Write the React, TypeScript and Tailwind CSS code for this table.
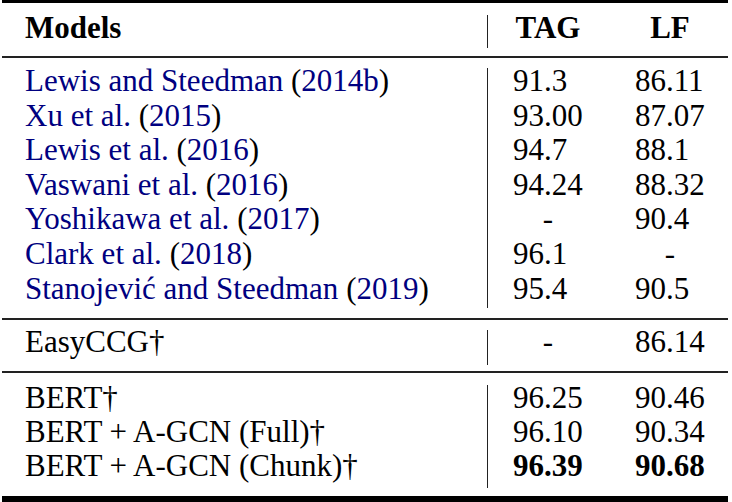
import React from "react";

type Cite = { name: string; year: string; tag: string; lf: string };

const cited: Cite[] = [
  { name: "Lewis and Steedman", year: "2014b", tag: "91.3", lf: "86.11" },
  { name: "Xu et al.", year: "2015", tag: "93.00", lf: "87.07" },
  { name: "Lewis et al.", year: "2016", tag: "94.7", lf: "88.1" },
  { name: "Vaswani et al.", year: "2016", tag: "94.24", lf: "88.32" },
  { name: "Yoshikawa et al.", year: "2017", tag: "-", lf: "90.4" },
  { name: "Clark et al.", year: "2018", tag: "96.1", lf: "-" },
  { name: "Stanojević and Steedman", year: "2019", tag: "95.4", lf: "90.5" },
];

const ours = [
  { model: "BERT†", tag: "96.25", lf: "90.46", bold: false },
  { model: "BERT + A-GCN (Full)†", tag: "96.10", lf: "90.34", bold: false },
  { model: "BERT + A-GCN (Chunk)†", tag: "96.39", lf: "90.68", bold: true },
];

const Num = ({ v, bold }: { v: string; bold?: boolean }) => (
  <div
    className={`w-[70px] h-[34.5px] whitespace-nowrap ${
      v === "-" ? "text-center" : "text-left"
    } ${bold ? "font-bold" : ""}`}
  >
    {v}
  </div>
);

const App = () => {
  return (
    <div className="w-[732px] h-[502px] bg-white pl-[2px] text-black font-[family-name:'Liberation_Serif',serif] text-[31px] leading-[34.5px]">
      <div className="w-[726px] flex flex-col">
        <div className="h-[3px] bg-black" />

        {/* header */}
        <div className="flex h-[53px]">
          <div className="w-[485px] pl-[23px] pt-[7.5px] font-bold">Models</div>
          <div className="w-px bg-[#222] mt-[12px] mb-[8px]" />
          <div className="w-[122px] pl-[25px] pt-[7.5px] font-bold">
            <div className="w-[70px] text-center">TAG</div>
          </div>
          <div className="flex-1 pl-[25px] pt-[7.5px] font-bold">
            <div className="w-[70px] text-center">LF</div>
          </div>
        </div>
        <div className="h-[2px] bg-[#222]" />

        {/* prior work */}
        <div className="flex h-[260px]">
          <div className="w-[485px] pl-[23px] pt-[6px] flex flex-col">
            {cited.map((c) => (
              <div key={c.name} className="h-[34.6px] whitespace-nowrap">
                <span className="text-[#000080]">{c.name}</span> (
                <span className="text-[#000080]">{c.year}</span>)
              </div>
            ))}
          </div>
          <div className="w-px bg-[#222] mt-[10px] mb-[10px]" />
          <div className="w-[122px] pl-[25px] pt-[6px] flex flex-col">
            {cited.map((c) => (
              <div key={c.name} className="h-[34.6px]">
                <Num v={c.tag} />
              </div>
            ))}
          </div>
          <div className="flex-1 pl-[25px] pt-[6px] flex flex-col">
            {cited.map((c) => (
              <div key={c.name} className="h-[34.6px]">
                <Num v={c.lf} />
              </div>
            ))}
          </div>
        </div>
        <div className="h-[2px] bg-[#222]" />

        {/* EasyCCG */}
        <div className="flex h-[51px]">
          <div className="w-[485px] pl-[23px] pt-[5px]">EasyCCG†</div>
          <div className="w-px bg-[#222] mt-[10px] mb-[6px]" />
          <div className="w-[122px] pl-[25px] pt-[5px]">
            <Num v="-" />
          </div>
          <div className="flex-1 pl-[25px] pt-[5px]">
            <Num v="86.14" />
          </div>
        </div>
        <div className="h-[2px] bg-[#222]" />

        {/* BERT */}
        <div className="flex h-[123px]">
          <div className="w-[485px] pl-[23px] pt-[8px] flex flex-col">
            {ours.map((r) => (
              <div key={r.model} className="h-[34px] whitespace-nowrap">
                {r.model}
              </div>
            ))}
          </div>
          <div className="w-px bg-[#222] mt-[12px] mb-[8px]" />
          <div className="w-[122px] pl-[25px] pt-[8px] flex flex-col">
            {ours.map((r) => (
              <div key={r.model} className="h-[34px]">
                <Num v={r.tag} bold={r.bold} />
              </div>
            ))}
          </div>
          <div className="flex-1 pl-[25px] pt-[8px] flex flex-col">
            {ours.map((r) => (
              <div key={r.model} className="h-[34px]">
                <Num v={r.lf} bold={r.bold} />
              </div>
            ))}
          </div>
        </div>
        <div className="h-[6px] bg-black" />
      </div>
    </div>
  );
};

export default App;
